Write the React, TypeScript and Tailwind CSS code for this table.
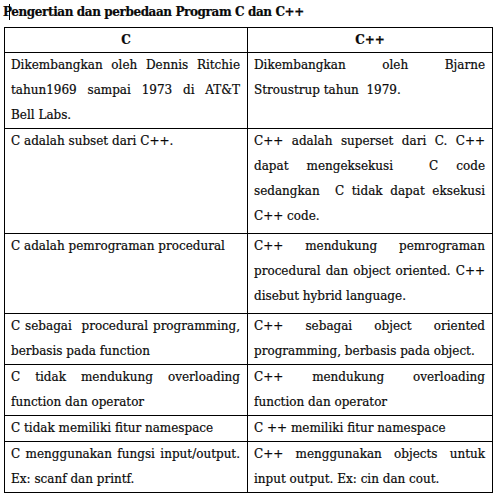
const rows: [string[], string[], string][] = [
  [
    ["Dikembangkan oleh Dennis Ritchie", "tahun1969 sampai 1973 di AT&T", "Bell Labs."],
    ["Dikembangkan oleh Bjarne", "Stroustrup tahun\u00a0 1979."],
    "h-[76px]",
  ],
  [
    ["C adalah subset dari C++."],
    ["C++ adalah superset dari C. C++", "dapat mengeksekusi\u00a0 C code", "sedangkan\u00a0 C tidak dapat eksekusi", "C++ code."],
    "h-[105px]",
  ],
  [
    ["C adalah pemrograman procedural"],
    ["C++ mendukung pemrograman", "procedural dan object oriented. C++", "disebut hybrid language."],
    "h-[80px]",
  ],
  [
    ["C sebagai\u00a0 procedural programming,", "berbasis pada function"],
    ["C++ sebagai object oriented", "programming, berbasis pada object."],
    "h-[51px]",
  ],
  [
    ["C tidak mendukung overloading", "function dan operator"],
    ["C++ mendukung overloading", "function dan operator"],
    "h-[51px]",
  ],
  [["C tidak memiliki fitur namespace"], ["C ++ memiliki fitur namespace"], "h-[25px]"],
  [
    ["C menggunakan fungsi input/output.", "Ex: scanf dan printf."],
    ["C++ menggunakan objects untuk", "input output. Ex: cin dan cout."],
    "h-[49px]",
  ],
];

function Cell({ lines }: { lines: string[] }) {
  return (
    <td className="border border-black align-top pl-[6px] pr-[7px] py-0 leading-[25px]">
      {lines.map((l, i) => (
        <div
          key={i}
          className={i < lines.length - 1 ? "whitespace-nowrap text-justify [text-align-last:justify]" : "whitespace-nowrap"}
        >
          {l}
        </div>
      ))}
    </td>
  );
}

export default function App() {
  return (
    <div className="w-[500px] h-[502px] bg-white text-[#0a0a0a] font-['DejaVu_Serif',serif] text-[12px] [-webkit-text-stroke:0.2px]">
      <div className="relative h-[27px] pl-[3px] pt-[3px] font-bold text-[12px] tracking-[-0.4px] leading-[18px] whitespace-nowrap">
        <span className="absolute left-[9px] top-[4px] w-px h-[16px] bg-black" />
        Pengertian dan perbedaan Program C dan C++
      </div>
      <table className="ml-[4px] w-[488px] border-collapse table-fixed">
        <colgroup>
          <col className="w-[243px]" />
          <col className="w-[245px]" />
        </colgroup>
        <thead>
          <tr className="h-[25px]">
            <th className="border border-black font-bold text-center leading-[24px] p-0">C</th>
            <th className="border border-black font-bold text-center leading-[24px] p-0">C++</th>
          </tr>
        </thead>
        <tbody>
          {rows.map(([c, cpp, h], i) => (
            <tr key={i} className={h}>
              <Cell lines={c} />
              <Cell lines={cpp} />
            </tr>
          ))}
        </tbody>
      </table>
    </div>
  );
}
